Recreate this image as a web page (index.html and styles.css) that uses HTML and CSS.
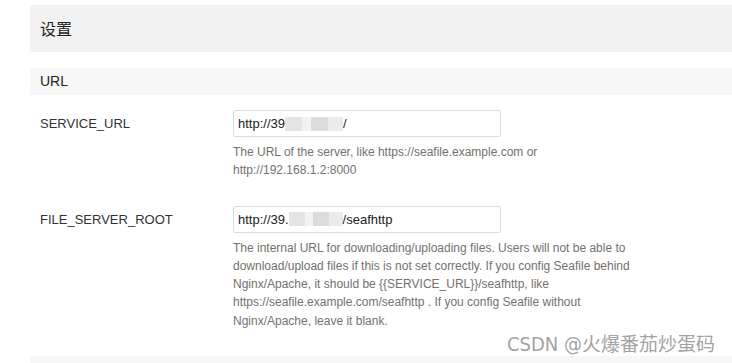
FILE: index.html
```html
<!DOCTYPE html>
<html lang="zh">
<head>
<meta charset="utf-8">
<title>设置</title>
<link rel="stylesheet" href="styles.css">
</head>
<body>
<div class="page">
  <div class="page-head">设置</div>
  <div class="section-bar">URL</div>
  <div class="field">
    <div class="field-label">SERVICE_URL</div>
    <div class="field-control">
      <div class="input"><span>http://39</span><span class="blur b1"></span><span>/</span></div>
      <p class="help">The URL of the server, like https://seafile.example.com or http://192.168.1.2:8000</p>
    </div>
  </div>
  <div class="field">
    <div class="field-label">FILE_SERVER_ROOT</div>
    <div class="field-control">
      <div class="input"><span>http://39.</span><span class="blur b2"></span><span>/seafhttp</span></div>
      <p class="help">The internal URL for downloading/uploading files. Users will not be able to download/upload files if this is not set correctly. If you config Seafile behind Nginx/Apache, it should be {{SERVICE_URL}}/seafhttp, like https://seafile.example.com/seafhttp . If you config Seafile without Nginx/Apache, leave it blank.</p>
    </div>
  </div>
  <div class="section-bar bottom"></div>
  <div class="watermark"><span class="wm-latin">CSDN @</span><span class="wm-cjk">火爆番茄炒蛋码</span></div>
</div>
</body>
</html>
```
FILE: styles.css
```css
html, body {
  margin: 0;
  padding: 0;
  background: #fff;
}
body {
  font-family: "Liberation Sans", Arial, "Noto Sans CJK SC", sans-serif;
  color: #333;
  overflow: hidden;
  height: 363px;
}
.page {
  position: relative;
  padding: 5px 0 0 30px;
}
.page-head {
  background: #f2f2f2;
  height: 47px;
  line-height: 47px;
  padding-left: 10px;
  font-size: 16px;
  font-family: "Noto Sans CJK SC", sans-serif;
  border-radius: 2px 0 0 2px;
  color: #222;
}
.section-bar {
  margin-top: 16px;
  background: #f7f7f7;
  height: 27px;
  line-height: 27px;
  padding-left: 10px;
  font-size: 14px;
  border-radius: 2px 0 0 2px;
  color: #222;
}
.section-bar.bottom {
  margin-top: 26px;
  height: 10px;
}
.field {
  display: grid;
  grid-template-columns: 193px 400px;
  padding-left: 10px;
  margin-top: 15px;
}
.field + .field {
  margin-top: 26px;
}
.field-label {
  font-size: 13px;
  line-height: 27px;
  color: #333;
}
.input {
  box-sizing: border-box;
  width: 268px;
  height: 27px;
  border: 1px solid #ddd;
  border-radius: 2px;
  padding-left: 4px;
  font-size: 13px;
  line-height: 25px;
  color: #222;
  display: flex;
  align-items: center;
}
.blur {
  display: inline-block;
  height: 14px;
  background: linear-gradient(90deg, #e4e4e4 0, #e4e4e4 30%, #f2f2f2 30%, #f2f2f2 45%, #dcdcdc 45%, #dcdcdc 75%, #ebebeb 75%);
}
.b1 { width: 58px; }
.b2 { width: 54px; }
.help {
  margin: 6px 0 0 0;
  font-size: 12px;
  line-height: 18.3px;
  color: #74716e;
  width: 400px;
}
.watermark {
  position: absolute;
  left: 507px;
  top: 331px;
  white-space: nowrap;
  color: #a3a3a3;
  font-size: 20px;
  line-height: 24px;
  text-shadow: 0 0 2px #fff, 0 0 1px #fff;
}
.wm-latin {
  font-family: "Liberation Sans Narrow", "DejaVu Sans Condensed", "Liberation Sans", sans-serif;
}
.wm-cjk {
  font-family: "Noto Sans CJK SC", sans-serif;
  font-size: 19px;
}
```
